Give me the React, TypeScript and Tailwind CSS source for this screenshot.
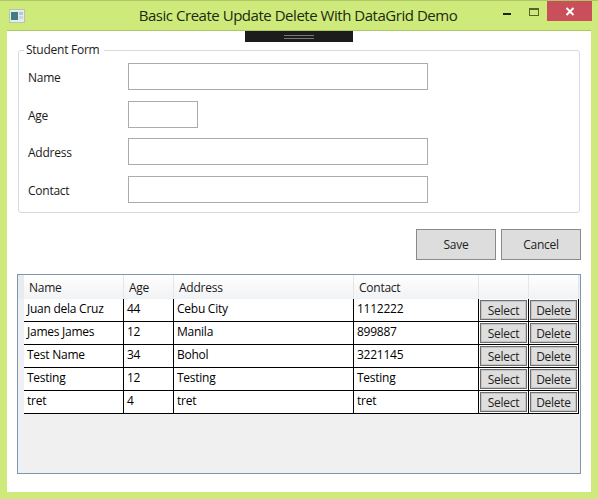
const font = "[font-family:'Open_Sans','Noto_Sans',sans-serif]";

const students = [
  { name: 'Juan dela Cruz', age: '44', address: 'Cebu City', contact: '1112222' },
  { name: 'James James', age: '12', address: 'Manila', contact: '899887' },
  { name: 'Test Name', age: '34', address: 'Bohol', contact: '3221145' },
  { name: 'Testing', age: '12', address: 'Testing', contact: 'Testing' },
  { name: 'tret', age: '4', address: 'tret', contact: 'tret' },
];

const columns = 'grid grid-cols-[100px_50px_180px_125px_50px_50px]';

function FormRow({ label, width, className }: { label: string; width: string; className: string }) {
  return (
    <div className={`flex items-center ${className}`}>
      <span className="w-[100px] pt-[2px] text-[12px] text-[#1a1a1a]">{label}</span>
      <div className={`h-[27px] border border-[#ababab] bg-white ${width}`} />
    </div>
  );
}

function HeaderCell({ label }: { label?: string }) {
  return (
    <div className="flex h-[24px] items-center border-r border-[#e3e6ea] bg-gradient-to-b from-white to-[#f1f2f4] pl-[5px] pt-px text-[12px] text-[#1a1a1a]">
      {label}
    </div>
  );
}

function GridButton({ label }: { label: string }) {
  return (
    <div className="flex h-[23px] items-center justify-center border-r border-b border-black">
      <div className="flex h-[20px] w-[47px] items-center justify-center border border-[#6f6f6f] bg-[#dedede] pt-px text-[12px] text-[#222] shadow-[inset_0_0_0_1px_#c4c4c4]">
        {label}
      </div>
    </div>
  );
}

function TextCell({ value }: { value: string }) {
  return (
    <div className="flex h-[23px] items-center border-r border-b border-black pb-[2px] pl-[3px] text-[12px] text-black">
      {value}
    </div>
  );
}

export default function App() {
  return (
    <div className={`flex h-[499px] w-[598px] flex-col border-t border-[#aec666] bg-[#cdea7b] tracking-[-0.25px] ${font}`}>
      {/* Title bar */}
      <div className="grid h-[29px] grid-cols-[1fr_auto_1fr] items-center">
        <div className="pl-[9px]">
          <svg width="16" height="14" viewBox="0 0 16 14">
            <rect x="0.5" y="0.5" width="15" height="13" fill="#e4ecec" stroke="#b9c4b0" />
            <rect x="2" y="3" width="7" height="8" fill="#3f7d86" />
            <rect x="10" y="3" width="4" height="3" fill="#b7c8d0" />
            <rect x="10" y="7" width="4" height="3" fill="#ccd6da" />
          </svg>
        </div>
        <div className="mr-[2px] text-[15px] tracking-[-0.47px] text-[#1d2a10]">Basic Create Update Delete With DataGrid Demo</div>
        <div className="flex h-full items-start justify-end pr-[6px]">
          <div className="mt-[12px] h-[2px] w-[8px] bg-[#1c2410]" />
          <div className="mr-[8px] ml-[18px] mt-[7px] h-[8px] w-[10px] border border-t-2 border-[#55662c]" />
          <div className="flex h-[20px] w-[45px] items-center justify-center bg-[#c9505a] text-white">
            <svg width="10" height="9" viewBox="0 0 10 9">
              <path d="M1.5 1 L8.5 8 M8.5 1 L1.5 8" stroke="white" strokeWidth="2" />
            </svg>
          </div>
        </div>
      </div>

      {/* Client area */}
      <div className="relative mx-[7px] mb-[7px] flex-1 border-t border-[#aec666] bg-white px-[10px]">
        <div className="absolute left-[238px] top-0 flex h-[11px] w-[108px] items-center justify-center bg-[#1c1c1c]">
          <div className="h-[4px] w-[30px] border-y border-[#777]" />
        </div>

        <fieldset className="ml-px mt-[10px] h-[172px] w-[562px] rounded-[3px] border border-[#d5dae0] px-[9px]">
          <legend className="ml-[-4px] pl-[2px] pr-[5px] text-[12px] text-[#1a1a1a]">Student Form</legend>
          <FormRow label="Name" width="w-[300px]" className="mt-[4px]" />
          <FormRow label="Age" width="w-[70px]" className="mt-[11px]" />
          <FormRow label="Address" width="w-[300px]" className="mt-[10px]" />
          <FormRow label="Contact" width="w-[300px]" className="mt-[11px]" />
        </fieldset>

        <div className="mt-[16px] flex justify-end gap-[5px]">
          <div className="flex h-[31px] w-[80px] items-center justify-center border border-[#8a8a8a] bg-[#dddddd] text-[12px] text-[#222]">Save</div>
          <div className="flex h-[31px] w-[80px] items-center justify-center border border-[#8a8a8a] bg-[#dddddd] text-[12px] text-[#222]">Cancel</div>
        </div>

        {/* DataGrid */}
        <div className="mt-[14px] flex h-[200px] w-[564px] border border-[#7f94ad] bg-[#f0f0f0]">
          <div className="flex w-[6px] flex-col">
            <div className="h-[24px] bg-[#e9ecef]" />
            <div className="flex-1 bg-[#eef0f3]" />
          </div>
          <div className="flex-1">
            <div className={columns}>
              <HeaderCell label="Name" />
              <HeaderCell label="Age" />
              <HeaderCell label="Address" />
              <HeaderCell label="Contact" />
              <HeaderCell />
              <HeaderCell />
            </div>
            {students.map((s) => (
              <div key={s.name} className={`${columns} bg-white`}>
                <TextCell value={s.name} />
                <TextCell value={s.age} />
                <TextCell value={s.address} />
                <TextCell value={s.contact} />
                <GridButton label="Select" />
                <GridButton label="Delete" />
              </div>
            ))}
          </div>
        </div>
      </div>
    </div>
  );
}
